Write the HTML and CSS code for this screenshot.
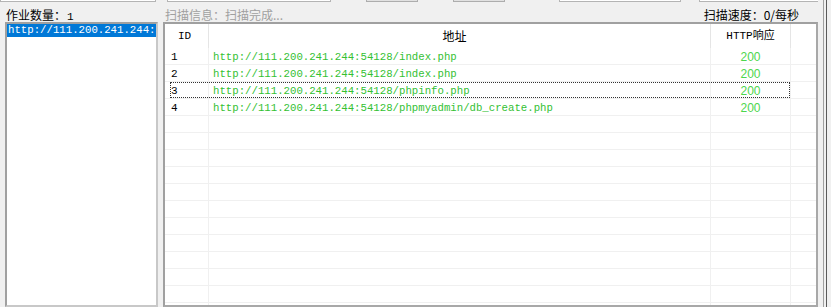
FILE: index.html
```html
<!DOCTYPE html>
<html>
<head>
    <meta charset="UTF-8">
    <title>扫描</title>
    <link rel="stylesheet" href="styles.css">
</head>
<body>
  <!-- bottoms of the toolbar controls, cut off by the window top -->
  <div class="topstrip">
    <span class="tb tb1"></span>
    <span class="tb tb2"></span>
    <span class="tb btn tb3"></span>
    <span class="tb btn tb4"></span>
    <span class="tb tb5"></span>
    <span class="tb tb6"></span>
  </div>

  <div class="main">
    <div class="left">
      <div class="caption">作业数量：<span class="num">1</span></div>
      <div class="listbox">
        <div class="item selected">http://111.200.241.244:5</div>
      </div>
    </div>

    <div class="right">
      <div class="caption status">
        <span class="info">扫描信息：扫描完成...</span>
        <span class="speed">扫描速度：0/每秒</span>
      </div>
      <div class="grid">
        <div class="row head">
          <div class="cell id">ID</div>
          <div class="cell url">地址</div>
          <div class="cell code">HTTP响应</div>
          <div class="cell pad"></div>
        </div>
        <div class="row">
          <div class="cell id">1</div>
          <div class="cell url">http://111.200.241.244:54128/index.php</div>
          <div class="cell code">200</div>
          <div class="cell pad"></div>
        </div>
        <div class="row">
          <div class="cell id">2</div>
          <div class="cell url">http://111.200.241.244:54128/index.php</div>
          <div class="cell code">200</div>
          <div class="cell pad"></div>
        </div>
        <div class="row focused">
          <div class="cell id">3</div>
          <div class="cell url">http://111.200.241.244:54128/phpinfo.php</div>
          <div class="cell code">200</div>
          <div class="cell pad"></div>
        </div>
        <div class="row">
          <div class="cell id">4</div>
          <div class="cell url">http://111.200.241.244:54128/phpmyadmin/db_create.php</div>
          <div class="cell code">200</div>
          <div class="cell pad"></div>
        </div>
        <div class="row"><div class="cell id"></div><div class="cell url"></div><div class="cell code"></div><div class="cell pad"></div></div>
        <div class="row"><div class="cell id"></div><div class="cell url"></div><div class="cell code"></div><div class="cell pad"></div></div>
        <div class="row"><div class="cell id"></div><div class="cell url"></div><div class="cell code"></div><div class="cell pad"></div></div>
        <div class="row"><div class="cell id"></div><div class="cell url"></div><div class="cell code"></div><div class="cell pad"></div></div>
        <div class="row"><div class="cell id"></div><div class="cell url"></div><div class="cell code"></div><div class="cell pad"></div></div>
        <div class="row"><div class="cell id"></div><div class="cell url"></div><div class="cell code"></div><div class="cell pad"></div></div>
        <div class="row"><div class="cell id"></div><div class="cell url"></div><div class="cell code"></div><div class="cell pad"></div></div>
        <div class="row"><div class="cell id"></div><div class="cell url"></div><div class="cell code"></div><div class="cell pad"></div></div>
        <div class="row"><div class="cell id"></div><div class="cell url"></div><div class="cell code"></div><div class="cell pad"></div></div>
        <div class="row"><div class="cell id"></div><div class="cell url"></div><div class="cell code"></div><div class="cell pad"></div></div>
        <div class="row"><div class="cell id"></div><div class="cell url"></div><div class="cell code"></div><div class="cell pad"></div></div>
        <div class="row"><div class="cell id"></div><div class="cell url"></div><div class="cell code"></div><div class="cell pad"></div></div>
      </div>
    </div>

    <div class="edge"></div>
  </div>
</body>
</html>
```

FILE: styles.css
```css
html, body {
  margin: 0;
  padding: 0;
}
body {
  background-color: #f0f0f0;
  width: 831px;
  height: 307px;
  overflow: hidden;
  font-family: "Noto Sans CJK SC", "Liberation Sans", sans-serif;
  font-size: 12px;
  color: #000;
}

/* toolbar remains */
.topstrip {
  display: flex;
  align-items: flex-end;
  height: 3px;
  overflow: hidden;
}
.tb {
  display: block;
  height: 12px;
  margin-bottom: 1px;
  box-sizing: border-box;
  border: 1px solid #b4b4b4;
  background: #fff;
}
.tb.btn {
  background: #e1e1e1;
  border-color: #adadad;
}
.tb1 { width: 156px; margin-left: 0; }
.tb2 { width: 164px; margin-left: 11px; }
.tb3 { width: 52px; margin-left: 35px; }
.tb4 { width: 52px; margin-left: 35px; }
.tb5 { width: 122px; margin-left: 54px; }
.tb6 { width: 122px; margin-left: 18px; }

.main {
  display: flex;
  height: 304px;
}

.caption {
  height: 19px;
  box-sizing: border-box;
  padding-top: 3px;
  line-height: 17px;
  white-space: nowrap;
}
.num {
  font-family: "Liberation Mono", monospace;
  font-size: 11px;
  margin-left: 1px;
}

/* left job list */
.left {
  width: 153px;
  margin-left: 5px;
  display: flex;
  flex-direction: column;
}
.left .caption {
  padding-left: 1px;
}
.listbox {
  flex: 1;
  background: #fff;
  border: 2px solid;
  border-color: #a0a0a0 #c8c8c8 #c8c8c8 #a0a0a0;
  overflow: hidden;
}
.item {
  font-family: "Liberation Mono", monospace;
  font-size: 10.7px;
  line-height: 13px;
  height: 13px;
  padding-left: 1px;
  white-space: nowrap;
}
.item.selected {
  background: #0078d7;
  color: #fff;
}

/* right result grid */
.right {
  width: 655px;
  margin-left: 5px;
  display: flex;
  flex-direction: column;
}
.status {
  display: flex;
  justify-content: space-between;
  padding-left: 2px;
  padding-right: 19px;
}
.info {
  color: #a0a0a0;
}
.grid {
  flex: 1;
  background: #fff;
  border: 2px solid;
  border-color: #a0a0a0 #a8a8a8 #a8a8a8 #a0a0a0;
  overflow: hidden;
}
.row {
  display: flex;
  height: 17px;
  position: relative;
}
.row .cell {
  box-sizing: border-box;
  border-right: 1px solid #f0f0f0;
  border-bottom: 1px solid #f0f0f0;
  padding-top: 1px;
  line-height: 17px;
  white-space: nowrap;
  overflow: hidden;
}
.cell.id {
  width: 44px;
  padding-left: 6px;
  font-family: "Liberation Mono", monospace;
  font-size: 11px;
}
.cell.url {
  width: 502px;
  padding-left: 4px;
  font-family: "Liberation Mono", monospace;
  font-size: 10.7px;
  color: #33c133;
}
.cell.code {
  width: 80px;
  text-align: center;
  font-family: "Liberation Sans", sans-serif;
  color: #4dd64d;
}
.cell.pad {
  flex: 1;
  border-right: none;
}

.row.head {
  height: 24px;
}
.row.head .cell {
  padding-top: 0;
  line-height: 24px;
  border-bottom: none;
  border-right-color: #e5e5e5;
  color: #000;
  text-align: center;
  padding-left: 0;
}
.row.head .cell.id {
  padding-right: 4px;
}
.row.head .cell.url {
  font-family: "Noto Sans CJK SC", sans-serif;
  font-size: 12px;
  padding-right: 10px;
}
.row.head .cell.code {
  font-family: "Liberation Mono", "Noto Sans CJK SC", monospace;
  font-size: 11px;
}

/* keyboard focus rectangle on the third row */
.row.focused::after {
  content: "";
  position: absolute;
  left: 5px;
  right: 26px;
  top: 0;
  height: 16px;
  box-sizing: border-box;
  border: 1px dotted #333;
}

/* window frame at the right */
.edge {
  width: 13px;
  box-sizing: border-box;
  border-left: 5px solid #f0f0f0;
  border-right: 4px solid #f0f0f0;
  background: linear-gradient(to right, #a0a0a0 0, #a0a0a0 1px, #f0f0f0 1px, #f0f0f0 3px, #5a5a5a 3px);
  margin-top: -3px;
  height: 307px;
}
```
